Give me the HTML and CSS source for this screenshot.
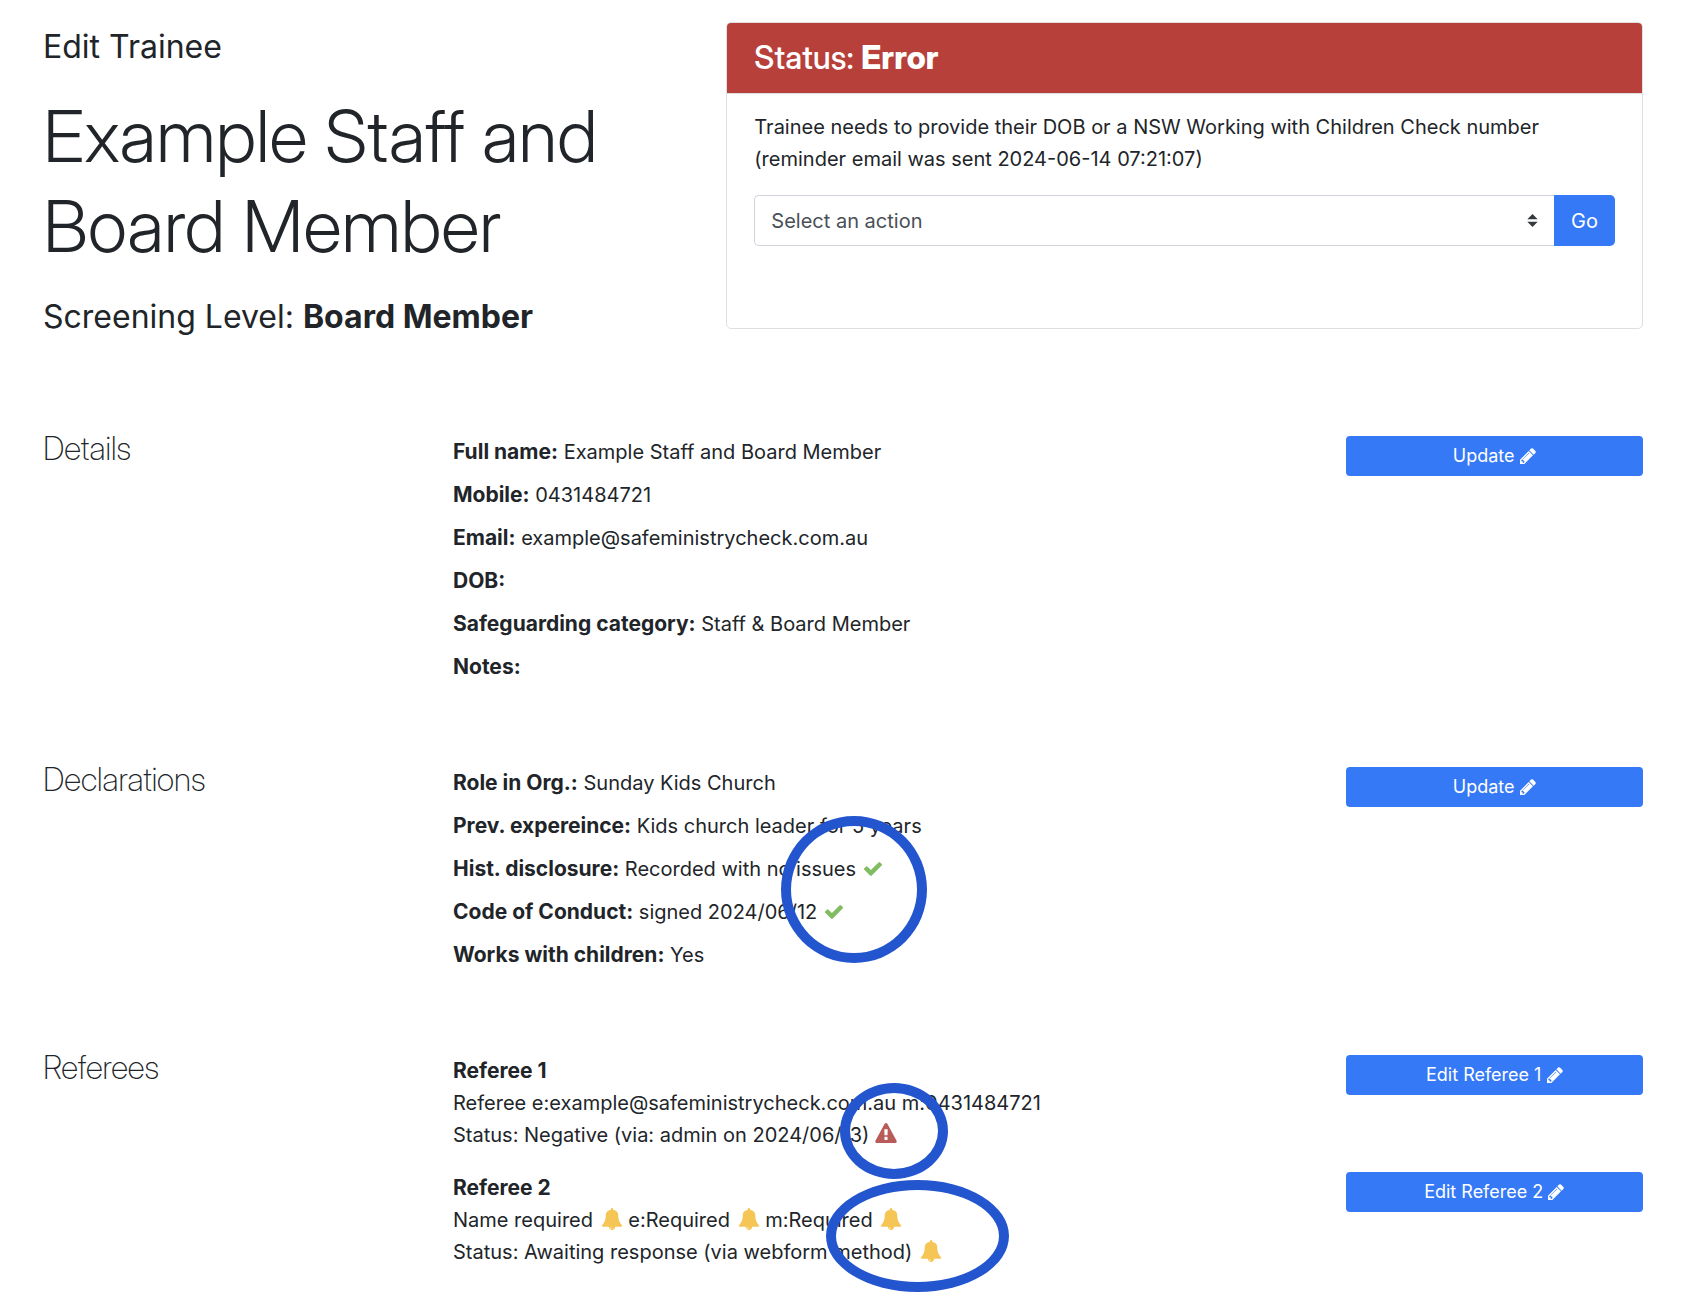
FILE: index.html
```html
<!DOCTYPE html>
<html lang="en">
<head>
<meta charset="utf-8">
<meta name="viewport" content="width=device-width, initial-scale=1">
<title>Edit Trainee</title>
<link rel="stylesheet" href="styles.css">
</head>
<body>
<svg class="sprite" aria-hidden="true">
  <symbol id="pencil" viewBox="0 0 1536 1536"><path d="M363 1408l91-91-235-235-91 91v107h128v128h107zm523-928q0-22-22-22-10 0-17 7l-542 542q-7 7-7 17 0 22 22 22 10 0 17-7l542-542q7-7 7-17zm-54-192l416 416-832 832H0v-416zm683 96q0 53-37 90l-166 166-416-416 166-165q36-38 90-38 53 0 91 38l235 234q37 39 37 91z"/></symbol>
  <symbol id="check" viewBox="0 0 1550 1188"><path d="M1550 232q0 40-28 68l-724 724-136 136q-28 28-68 28t-68-28l-136-136L28 662Q0 634 0 594t28-68l136-136q28-28 68-28t68 28l294 295 656-657q28-28 68-28t68 28l136 136q28 28 28 68z"/></symbol>
  <symbol id="warning" viewBox="0 0 1792 1664"><path fill-rule="evenodd" d="M1024 1375v-190q0-14-9.500-23.500T992 1152H800q-13 0-22.500 9.500T768 1185v190q0 14 9.500 23.500T800 1408h192q13 0 22.500-9.500t9.500-23.500zm-2-374l18-459q0-12-10-19-13-11-24-11H786q-11 0-24 11-10 7-10 21l17 457q0 10 10 16.500t24 6.500h185q14 0 23.500-6.500t10.500-16.500zm-14-934l768 1408q35 63-2 126-17 29-46.500 46t-63.500 17H128q-34 0-63.500-17T18 1601q-37-63-2-126L784 67q17-31 47-49t65-18 65 18 47 49z"/></symbol>
  <symbol id="bell" viewBox="0 0 1664 1792"><path d="M848 1696q0-16-16-16-59 0-101.500-42.500T688 1536q0-16-16-16t-16 16q0 73 51.500 124.500T832 1712q16 0 16-16zm816-288q0 52-38 90t-90 38h-448q0 106-75 181t-181 75-181-75-75-181H128q-52 0-90-38t-38-90q50-42 91-88t85-119.500 74.500-158.500 50-206T320 576q0-152 117-282.500T744 135q-8-19-8-39 0-40 28-68t68-28 68 28 28 68q0 20-8 39 190 28 307 158.500T1344 576q0 139 19.500 260t50 206 74.500 158.500 85 119.500 91 88z"/></symbol>
</svg>

<main class="page">
  <header class="row top">
    <div class="col-title">
      <p class="eyebrow">Edit Trainee</p>
      <h1 class="name">Example Staff and Board Member</h1>
      <p class="eyebrow">Screening Level: <strong>Board Member</strong></p>
    </div>
    <div class="col-status">
      <section class="card">
        <h2 class="card-header">Status: <strong>Error</strong></h2>
        <div class="card-body">
          <p class="message">Trainee needs to provide their DOB or a NSW Working with Children Check number (reminder email was sent 2024-06-14 07:21:07)</p>
          <form class="action">
            <select class="action-select" aria-label="Select an action">
              <option>Select an action</option>
            </select>
            <button class="action-go" type="button">Go</button>
          </form>
        </div>
      </section>
    </div>
  </header>

  <section class="section">
    <h2 class="section-title">Details</h2>
    <div class="section-body">
      <div class="entry">
        <div class="facts">
          <p><strong>Full name:</strong> Example Staff and Board Member</p>
          <p><strong>Mobile:</strong> 0431484721</p>
          <p><strong>Email:</strong> example@safeministrycheck.com.au</p>
          <p><strong>DOB:</strong></p>
          <p><strong>Safeguarding category:</strong> Staff &amp; Board Member</p>
          <p><strong>Notes:</strong></p>
        </div>
        <button class="btn" type="button">Update <svg class="icon-pencil"><use href="#pencil"/></svg></button>
      </div>
    </div>
  </section>

  <section class="section">
    <h2 class="section-title">Declarations</h2>
    <div class="section-body">
      <div class="entry">
        <div class="facts">
          <p><strong>Role in Org.:</strong> Sunday Kids Church</p>
          <p><strong>Prev. expereince:</strong> Kids church leader for 5 years</p>
          <p><strong>Hist. disclosure:</strong> Recorded with no issues <svg class="icon-check"><use href="#check"/></svg></p>
          <p><strong>Code of Conduct:</strong> signed 2024/06/12 <svg class="icon-check"><use href="#check"/></svg></p>
          <p><strong>Works with children:</strong> Yes</p>
        </div>
        <button class="btn" type="button">Update <svg class="icon-pencil"><use href="#pencil"/></svg></button>
      </div>
      <span class="ring ring-checks"></span>
    </div>
  </section>

  <section class="section">
    <h2 class="section-title">Referees</h2>
    <div class="section-body">
      <div class="entry">
        <p><strong>Referee 1</strong><br>Referee e:example@safeministrycheck.com.au m:0431484721<br>Status: Negative (via: admin on 2024/06/13) <svg class="icon-warning"><use href="#warning"/></svg></p>
        <button class="btn" type="button">Edit Referee 1 <svg class="icon-pencil"><use href="#pencil"/></svg></button>
      </div>
      <div class="entry">
        <p><strong>Referee 2</strong><br>Name required <svg class="icon-bell"><use href="#bell"/></svg> e:Required <svg class="icon-bell"><use href="#bell"/></svg> m:Required <svg class="icon-bell"><use href="#bell"/></svg><br>Status: Awaiting response (via webform method) <svg class="icon-bell"><use href="#bell"/></svg></p>
        <button class="btn" type="button">Edit Referee 2 <svg class="icon-pencil"><use href="#pencil"/></svg></button>
      </div>
      <span class="ring ring-warning"></span>
      <span class="ring ring-bells"></span>
    </div>
  </section>
</main>
</body>
</html>
```
FILE: styles.css
```css
*, *::before, *::after { box-sizing: border-box; }

body {
  margin: 0;
  background: #fff;
  color: #212529;
  font: 400 20px/32px Inter, "Liberation Sans", sans-serif;
}

h1, h2, p { margin: 0; }
strong { font-weight: 700; }

.sprite { display: none; }

.page { padding: 22px 65px 30px 43px; }

/* Header */
.row { display: flex; margin: 0 -20px; }
.col-title, .col-status { padding: 0 20px; }
.col-title { width: 41.6667%; }
.col-status { width: 58.3333%; }
.top { margin-bottom: 94px; }

.eyebrow { font-size: 32px; line-height: 50px; }
.name {
  margin: 19px 0 21px;
  font-family: "Inter Display", Inter, "Liberation Sans", sans-serif;
  font-size: 72px;
  font-weight: 350;
  line-height: 90px;
}

.card {
  min-height: 307px;
  border: 1px solid #dfdfdf;
  border-radius: 5px;
  overflow: hidden;
}
.card-header {
  padding: 16px 27px;
  border-bottom: 1px solid #dfdfdf;
  background: #b7403b;
  color: #fff;
  font-family: "Inter Display", Inter, "Liberation Sans", sans-serif;
  font-size: 32px;
  font-weight: 500;
  line-height: 38px;
}
.card-header strong { font-weight: 800; }
.card-body { padding: 17px 27px; }
.message { margin-bottom: 20px; }

.action { display: flex; }
.action-select {
  flex: 1;
  height: 51px;
  padding: 0 40px 0 16px;
  appearance: none;
  border: 1px solid #ced4da;
  border-right: 0;
  border-radius: 5px 0 0 5px;
  background: #fff url("data:image/svg+xml,%3Csvg xmlns='http://www.w3.org/2000/svg' viewBox='0 0 4 5'%3E%3Cpath fill='%23343a40' d='M2 0L0 2h4zm0 5L0 3h4z'/%3E%3C/svg%3E") no-repeat right 16px center / 11px 13px;
  color: #495057;
  font: inherit;
}
.action-go {
  padding: 0 17px;
  border: 0;
  border-radius: 0 5px 5px 0;
  background: #3579f6;
  color: #fff;
  font: inherit;
}

/* Sections */
.section {
  display: grid;
  grid-template-columns: minmax(0, 410fr) minmax(0, 1190fr);
  margin-bottom: 84px;
}
.section:last-child { margin-bottom: 0; }
.section-title {
  font-family: "Inter Display", Inter, "Liberation Sans", sans-serif;
  font-size: 32px;
  font-weight: 200;
  line-height: 26px;
}
.section-body {
  position: relative;
  display: grid;
  gap: 21px;
}
.entry {
  display: grid;
  grid-template-columns: minmax(0, 3fr) minmax(0, 1fr);
  align-items: start;
}
.entry strong { font-size: 21px; }
.facts { display: grid; gap: 11px; }

.btn {
  height: 40px;
  padding: 0;
  border: 0;
  border-radius: 4px;
  background: #3579f6;
  color: #fff;
  font: 400 18px/40px Inter, "Liberation Sans", sans-serif;
}

/* Icons */
.icon-pencil, .icon-check, .icon-warning, .icon-bell { fill: currentColor; }
.icon-pencil { width: 16px; height: 16px; vertical-align: -2px; }
.icon-check { width: 18px; height: 14px; margin-left: 2px; color: #7fbc62; }
.icon-warning { width: 22px; height: 20px; color: #b85c5a; vertical-align: -1px; }
.icon-bell { width: 22px; height: 22px; margin-left: 2px; color: #f5c556; vertical-align: -3px; }

/* Hand-drawn highlights over the status icons */
.ring {
  position: absolute;
  border: 10px solid #2355cf;
  border-radius: 50%;
  pointer-events: none;
}
.ring-checks { left: 328px; top: 49px; width: 146px; height: 147px; }
.ring-warning { left: 387px; top: 28px; width: 108px; height: 96px; }
.ring-bells { left: 373px; top: 125px; width: 183px; height: 112px; }
```
